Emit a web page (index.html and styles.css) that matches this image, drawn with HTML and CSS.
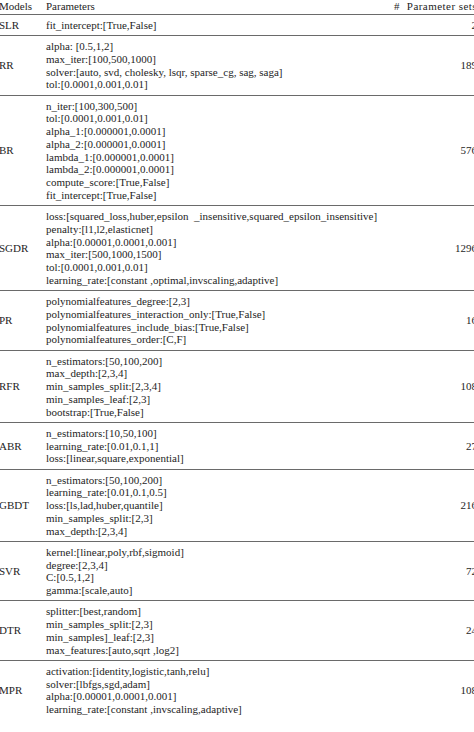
FILE: index.html
```html
<!DOCTYPE html>
<html>
<head>
<meta charset="utf-8">
<link rel="stylesheet" href="styles.css">
</head>
<body>
<div class="table">
  <div class="row head">
    <div class="model">Models</div>
    <div class="params">Parameters</div>
    <div class="count head-count"><span class="hash">#</span>Parameter sets</div>
  </div>
  <div class="row">
    <div class="model">SLR</div>
    <div class="params"><div>fit_intercept:[True,False]</div></div>
    <div class="count">2</div>
  </div>
  <div class="row">
    <div class="model">RR</div>
    <div class="params">
      <div>alpha: [0.5,1,2]</div>
      <div>max_iter:[100,500,1000]</div>
      <div>solver:[auto, svd, cholesky, lsqr, sparse_cg, sag, saga]</div>
      <div>tol:[0.0001,0.001,0.01]</div>
    </div>
    <div class="count">189</div>
  </div>
  <div class="row">
    <div class="model">BR</div>
    <div class="params">
      <div>n_iter:[100,300,500]</div>
      <div>tol:[0.0001,0.001,0.01]</div>
      <div>alpha_1:[0.000001,0.0001]</div>
      <div>alpha_2:[0.000001,0.0001]</div>
      <div>lambda_1:[0.000001,0.0001]</div>
      <div>lambda_2:[0.000001,0.0001]</div>
      <div>compute_score:[True,False]</div>
      <div>fit_intercept:[True,False]</div>
    </div>
    <div class="count">576</div>
  </div>
  <div class="row">
    <div class="model">SGDR</div>
    <div class="params">
      <div>loss:[squared_loss,huber,epsilon&nbsp; _insensitive,squared_epsilon_insensitive]</div>
      <div>penalty:[l1,l2,elasticnet]</div>
      <div>alpha:[0.00001,0.0001,0.001]</div>
      <div>max_iter:[500,1000,1500]</div>
      <div>tol:[0.0001,0.001,0.01]</div>
      <div>learning_rate:[constant ,optimal,invscaling,adaptive]</div>
    </div>
    <div class="count">1296</div>
  </div>
  <div class="row">
    <div class="model">PR</div>
    <div class="params">
      <div>polynomialfeatures_degree:[2,3]</div>
      <div>polynomialfeatures_interaction_only:[True,False]</div>
      <div>polynomialfeatures_include_bias:[True,False]</div>
      <div>polynomialfeatures_order:[C,F]</div>
    </div>
    <div class="count">16</div>
  </div>
  <div class="row">
    <div class="model">RFR</div>
    <div class="params">
      <div>n_estimators:[50,100,200]</div>
      <div>max_depth:[2,3,4]</div>
      <div>min_samples_split:[2,3,4]</div>
      <div>min_samples_leaf:[2,3]</div>
      <div>bootstrap:[True,False]</div>
    </div>
    <div class="count">108</div>
  </div>
  <div class="row">
    <div class="model">ABR</div>
    <div class="params">
      <div>n_estimators:[10,50,100]</div>
      <div>learning_rate:[0.01,0.1,1]</div>
      <div>loss:[linear,square,exponential]</div>
    </div>
    <div class="count">27</div>
  </div>
  <div class="row">
    <div class="model">GBDT</div>
    <div class="params">
      <div>n_estimators:[50,100,200]</div>
      <div>learning_rate:[0.01,0.1,0.5]</div>
      <div>loss:[ls,lad,huber,quantile]</div>
      <div>min_samples_split:[2,3]</div>
      <div>max_depth:[2,3,4]</div>
    </div>
    <div class="count">216</div>
  </div>
  <div class="row">
    <div class="model">SVR</div>
    <div class="params">
      <div>kernel:[linear,poly,rbf,sigmoid]</div>
      <div>degree:[2,3,4]</div>
      <div>C:[0.5,1,2]</div>
      <div>gamma:[scale,auto]</div>
    </div>
    <div class="count">72</div>
  </div>
  <div class="row">
    <div class="model">DTR</div>
    <div class="params">
      <div>splitter:[best,random]</div>
      <div>min_samples_split:[2,3]</div>
      <div>min_samples]_leaf:[2,3]</div>
      <div>max_features:[auto,sqrt ,log2]</div>
    </div>
    <div class="count">24</div>
  </div>
  <div class="row last">
    <div class="model">MPR</div>
    <div class="params">
      <div>activation:[identity,logistic,tanh,relu]</div>
      <div>solver:[lbfgs,sgd,adam]</div>
      <div>alpha:[0.00001,0.0001,0.001]</div>
      <div>learning_rate:[constant ,invscaling,adaptive]</div>
    </div>
    <div class="count">108</div>
  </div>
</div>
</body>
</html>
```

FILE: styles.css
```css
html, body {
  margin: 0;
  padding: 0;
  background: #ffffff;
  overflow: hidden;
}

body {
  width: 474px;
  height: 732px;
}

.table {
  width: 478px;
  margin-left: -1px;
  font-family: "Liberation Serif", "Times New Roman", serif;
  font-size: 11px;
  line-height: 12.75px;
  color: #1e1e1e;
}

.row {
  display: grid;
  grid-template-columns: 47px 1fr auto;
  align-items: center;
  padding: 4px 0 3.5px;
  border-bottom: 1.5px solid #6a6a6a;
}

.row.head {
  padding: 0 0 1px;
  align-items: start;
}

.row.last {
  border-bottom: none;
}

.params {
  white-space: nowrap;
}

.count {
  text-align: right;
  white-space: nowrap;
}

.head-count {
  letter-spacing: 0.45px;
}

.hash {
  margin-right: 7px;
}
```
